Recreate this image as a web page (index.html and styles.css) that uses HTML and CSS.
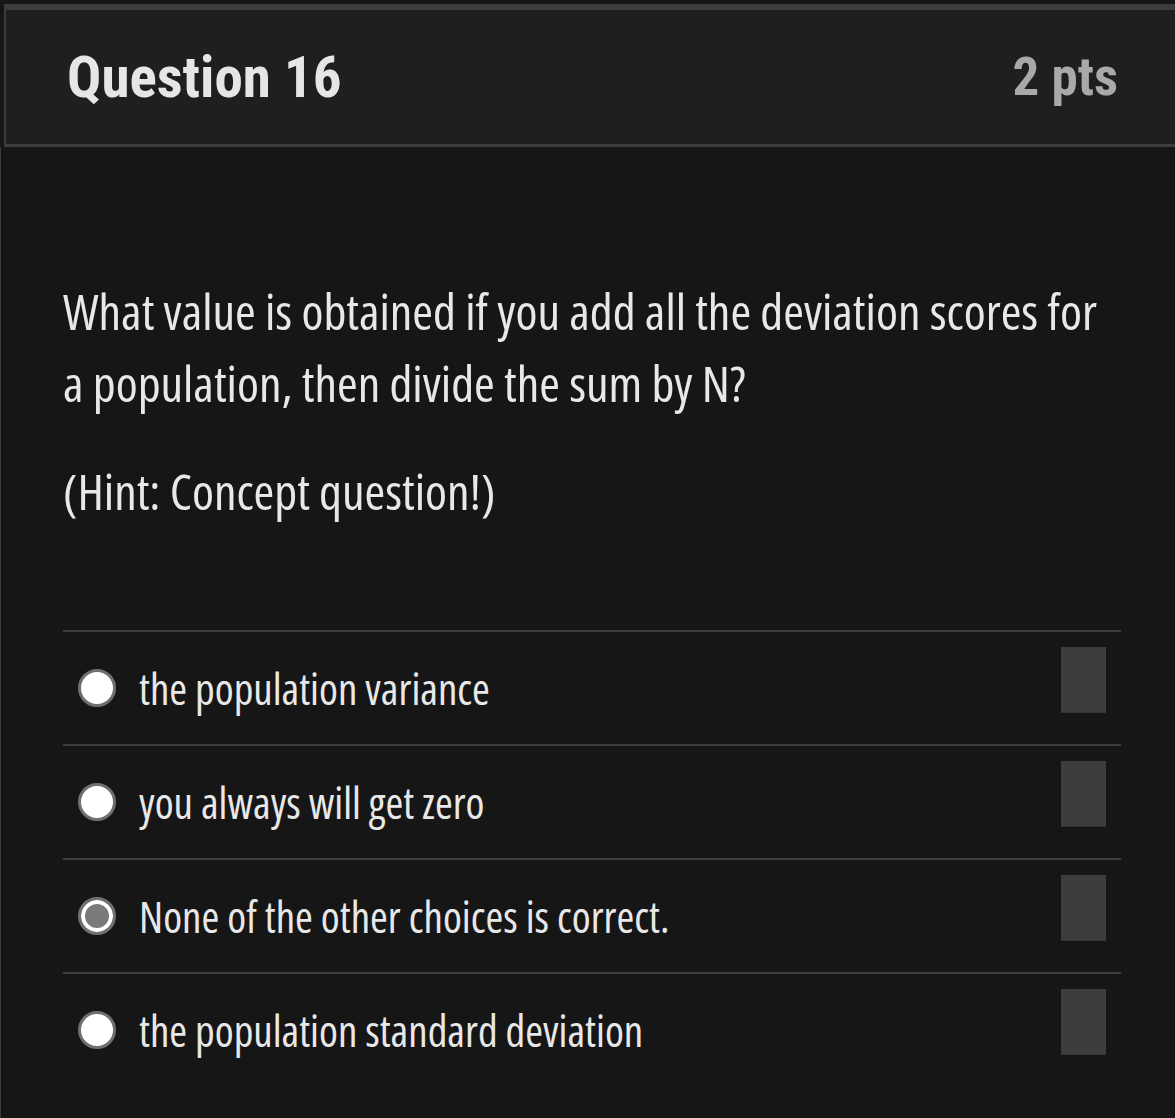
FILE: index.html
```html
<!DOCTYPE html>
<html lang="en">
<head>
<meta charset="utf-8">
<title>Question 16</title>
<link rel="stylesheet" href="styles.css">
</head>
<body>
<div class="card">
  <div class="header">
    <h2 class="title">Question 16</h2>
    <span class="pts">2 pts</span>
  </div>
  <div class="content">
    <div class="question">
      <p>What value is obtained if you add all the deviation scores for a population, then divide the sum by N?</p>
      <p>(Hint: Concept question!)</p>
    </div>
    <ul class="answers">
      <li class="answer"><span class="radio"></span><span class="label">the population variance</span><span class="flag"></span></li>
      <li class="answer"><span class="radio"></span><span class="label">you always will get zero</span><span class="flag"></span></li>
      <li class="answer"><span class="radio checked"></span><span class="label">None of the other choices is correct.</span><span class="flag"></span></li>
      <li class="answer"><span class="radio"></span><span class="label">the population standard deviation</span><span class="flag"></span></li>
    </ul>
  </div>
</div>
</body>
</html>
```

FILE: styles.css
```css
html, body {
  margin: 0;
  padding: 0;
  background: #161616;
}
body {
  font-family: "Open Sans", sans-serif;
  font-stretch: 75%;
  color: #e8e8e8;
  width: 1175px;
  height: 1118px;
  overflow: hidden;
}
.card {
  padding-top: 4px;
}
.header {
  margin-left: 4px;
  height: 134px;
  background: #1f1f1f;
  border-top: 6px solid #3c3c3c;
  border-left: 2px solid #3c3c3c;
  border-bottom: 3px solid #3c3c3c;
  display: flex;
  align-items: center;
  justify-content: space-between;
  padding: 0 57px 0 61px;
  font-family: "Roboto Condensed", "Open Sans", sans-serif;
}
.title {
  margin: 0;
  font-size: 57px;
  font-weight: 700;
  color: #e6e6e6;
}
.pts {
  font-size: 53px;
  font-weight: 700;
  color: #a9a9a9;
}
.content {
  box-sizing: border-box;
  border-left: 1px solid #3c3c3c;
  padding: 128px 54px 0 62px;
  min-height: 971px;
}
.question p {
  margin: 0 0 36px 0;
  font-size: 50px;
  line-height: 72px;
  max-width: 1059px;
}
.answers {
  list-style: none;
  margin: 103px 0 0 0;
  padding: 0;
}
.answer {
  height: 112px;
  border-top: 2px solid #3c3c3c;
  display: flex;
  align-items: center;
  padding: 0 15px;
}
.radio {
  width: 32px;
  height: 32px;
  border-radius: 50%;
  border: 3px solid #707070;
  background: #ffffff;
  flex: none;
  box-sizing: content-box;
}
.radio.checked {
  background: #7a7a7a;
  box-shadow: inset 0 0 0 4px #ffffff;
}
.label {
  margin-left: 23px;
  font-size: 43px;
  flex: 1;
}
.flag {
  align-self: flex-start;
  margin-top: 15px;
  width: 45px;
  height: 65px;
  background: #3d3d3d;
  border-bottom: 1px solid #333;
  flex: none;
}
```
